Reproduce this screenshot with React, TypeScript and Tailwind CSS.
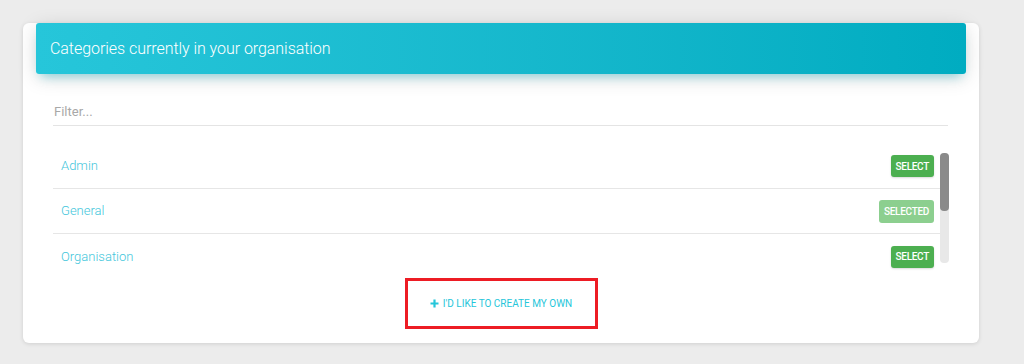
import React from 'react';

const categories = [
  { name: 'Admin', selected: false },
  { name: 'General', selected: true },
  { name: 'Organisation', selected: false },
];

export default function App() {
  return (
    <div className="min-h-screen bg-[#ececec] pl-[23px] pr-[45px] pt-[41px] font-['Roboto',sans-serif]">
      <div className="rounded-[6px] bg-white shadow-[0_1px_4px_rgba(0,0,0,0.12)] px-[30px] pb-[14px]">
        {/* header */}
        <div className="-mt-[18px] -mx-[17px] h-[51px] rounded-[3px] bg-gradient-to-r from-[#26c6da] to-[#00acc1] px-[14px] flex items-center shadow-[0_4px_20px_0_rgba(0,0,0,0.14),0_7px_10px_-5px_rgba(0,188,212,0.4)]">
          <h2 className="text-[16px] font-light text-white leading-none tracking-[-0.05px]">Categories currently in your organisation</h2>
        </div>

        {/* filter */}
        <div className="mt-[24px] mr-[1px] border-b border-[#e4e4e4] h-[28px] flex items-center">
          <input
            type="text"
            placeholder="Filter..."
            className="w-full pl-[1px] text-[13px] text-[#555] placeholder:text-[#a8a8a8] bg-transparent outline-none"
          />
        </div>

        {/* list */}
        <div className="mt-[18px] flex h-[130px] overflow-hidden">
          <div className="flex-1">
            {categories.map((c, i) => (
              <div
                key={c.name}
                className={`h-[45px] flex items-center justify-between pl-[7px] pr-[6px] ${i < categories.length - 1 ? 'border-b border-[#e6e6e6]' : ''}`}
              >
                <span className="pl-[1px] text-[13px] font-light text-[#3fc6db]">{c.name}</span>
                {c.selected ? (
                  <button className="h-[23px] px-[5px] rounded-[3px] bg-[#8ccf8f] text-white text-[10px] font-medium uppercase tracking-[-0.3px]">
                    Selected
                  </button>
                ) : (
                  <button className="h-[22px] px-[5px] rounded-[3px] bg-[#4caf50] text-white text-[10px] font-medium uppercase tracking-[-0.3px] shadow-[0_1px_2px_rgba(0,0,0,0.15)]">
                    Select
                  </button>
                )}
              </div>
            ))}
          </div>
          <div className="w-[9px] pt-[9px]">
            <div className="h-[110px] rounded-[4px] bg-[#e8e8e8] flex flex-col">
              <div className="h-[58px] rounded-[4px] bg-[#8a8a8a]" />
            </div>
          </div>
        </div>

        {/* create own */}
        <div className="mt-[4px] flex justify-center">
          <button className="w-[193px] h-[51px] border-[3px] border-[#ed1c24] flex items-center justify-center gap-[4px] text-[#26c6da] text-[10px] uppercase">
            <svg width="9" height="9" viewBox="0 0 9 9" className="shrink-0">
              <path d="M4.5 0.5v8M0.5 4.5h8" stroke="#26c6da" strokeWidth="2.2" />
            </svg>
            I'D LIKE TO CREATE MY OWN
          </button>
        </div>
      </div>
    </div>
  );
}
